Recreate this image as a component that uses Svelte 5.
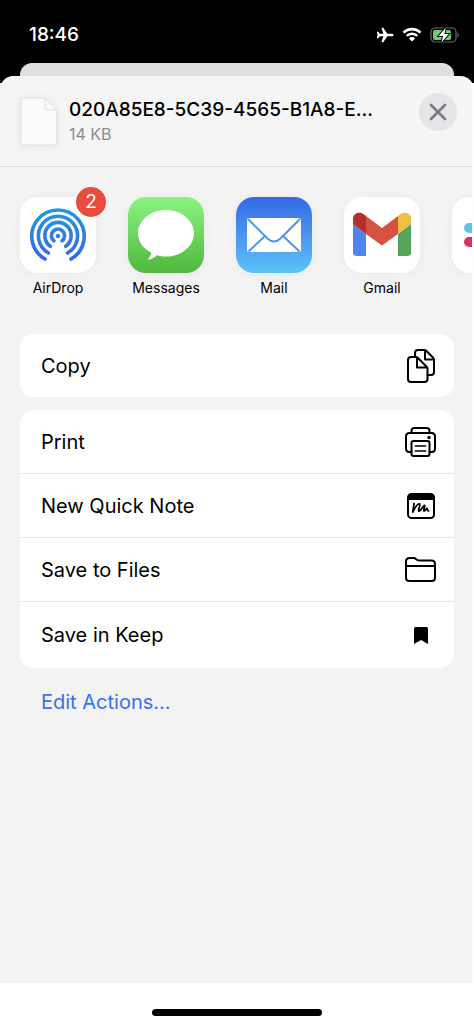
<script>
  const apps = [
    { id: "airdrop", name: "AirDrop", badge: 2 },
    { id: "messages", name: "Messages" },
    { id: "mail", name: "Mail" },
    { id: "gmail", name: "Gmail" },
    { id: "slack", name: "" }
  ];

  const actionGroups = [
    [{ id: "copy", label: "Copy" }],
    [
      { id: "print", label: "Print" },
      { id: "note", label: "New Quick Note" },
      { id: "files", label: "Save to Files" },
      { id: "keep", label: "Save in Keep" }
    ]
  ];
</script>

<div class="screen">
  <div class="status">
    <span class="status__time">18:46</span>
    <div class="status__icons">
      <svg width="18" height="16" viewBox="0 0 18 16" fill="#fff" aria-hidden="true">
        <path d="M17.6 8c0 .8-1.2 1.3-2.4 1.3h-3.8L7.2 15.2H5.4l2-5.9H3.8l-1.6 2H.8L1.6 8 .8 4.7h1.4l1.6 2h3.6l-2-5.9h1.8l4.2 5.9h3.8c1.2 0 2.4.5 2.4 1.3z" />
      </svg>
      <svg width="20" height="15" viewBox="0 0 20 15" fill="none" stroke="#fff" stroke-width="2.6" aria-hidden="true">
        <path d="M1.5 5.6a12.2 12.2 0 0 1 17 0M4.7 8.9a7.6 7.6 0 0 1 10.6 0" />
        <path d="M10 14.5l-3.1-3.1a4.4 4.4 0 0 1 6.2 0z" fill="#fff" stroke="none" />
      </svg>
      <svg width="30" height="16" viewBox="0 0 30 16" aria-hidden="true">
        <rect x="1" y="1" width="25" height="14" rx="4" fill="none" stroke="#6b6b6b" stroke-width="1.2" />
        <rect x="3" y="3" width="18" height="10" rx="2" fill="#6fce72" />
        <path d="M27.5 5.5c1.8.6 1.8 4.4 0 5z" fill="#6b6b6b" />
        <path d="M15.800.8L8.6 8.9h4.5L11.4 15.400l7.5-8.3h-4.6z" fill="#fff" stroke="#000" stroke-width="2" paint-order="stroke" />
      </svg>
    </div>
  </div>

  <div class="behind"></div>

  <main class="sheet">
    <header class="file">
      <svg class="file__icon" width="38" height="49" viewBox="0 0 38 49" aria-hidden="true">
        <path d="M1 1h24l12 12v35H1z" fill="#fcfcfc" stroke="#dcdcdc" />
        <path d="M25 1v10.5q0 1.5 1.5 1.5H37z" fill="#f8f8f8" stroke="#dcdcdc" />
      </svg>
      <div class="file__info">
        <h1 class="file__name">020A85E8-5C39-4565-B1A8-E...</h1>
        <p class="file__size">14 KB</p>
      </div>
      <button class="close" aria-label="Close">
        <svg width="18" height="18" viewBox="0 0 18 18" fill="none" stroke="#7c7c80" stroke-width="2.6" stroke-linecap="round">
          <path d="M2 2l14 14M16 2L2 16" />
        </svg>
      </button>
    </header>

    <div class="apps">
      {#each apps as app}
        <button class="app" aria-label={app.name || app.id}>
          <span class="app__icon app__icon--{app.id}">
            {#if app.id === "airdrop"}
              <svg viewBox="0 0 76 76" fill="none" stroke="url(#air)" stroke-width="3.600" stroke-linecap="round">
                <defs>
                  <linearGradient id="air" gradientUnits="userSpaceOnUse" x1="0" y1="11" x2="0" y2="64">
                    <stop offset="0" stop-color="#1d9be2" />
                    <stop offset="1" stop-color="#3a63e6" />
                  </linearGradient>
                </defs>
                <path d="M25 62a26.200 26.200 0 1 1 26 0" />
                <path d="M28.500 56a19.600 19.600 0 1 1 19 0" />
                <path d="M30.300 49.300a13.200 13.200 0 1 1 15.400 0" />
                <path d="M34 43.900a6.600 6.600 0 1 1 8 0" />
                <circle cx="38" cy="39" r="2.200" fill="url(#air)" stroke="none" />
              </svg>
            {:else if app.id === "messages"}
              <svg viewBox="0 0 76 76" fill="#fff">
                <path d="M38 13c15.600 0 28 10.500 28 23.300S53.600 59.600 38 59.600c-3.200 0-6.300-.4-9.200-1.300-2.400 2.500-5.700 4.200-9.300 4.400 2-1.700 3.500-4.600 3.800-7C15.200 51.600 10 44.600 10 36.300 10 23.500 22.400 13 38 13z" />
              </svg>
            {:else if app.id === "mail"}
              <svg viewBox="0 0 76 76" fill="none" stroke="#4193ee" stroke-width="1.800">
                <rect x="11" y="21" width="54" height="34" rx="2" fill="#fff" stroke="none" />
                <path d="M12 22l19.500 19.500q6.500 6 13 0L64 22M12.500 54.500L29 39M63.500 54.500L47 39" />
              </svg>
            {:else if app.id === "gmail"}
              <svg viewBox="0 0 76 76">
                <path d="M9 27l13 10v22H12.500Q9 59 9 55.500z" fill="#4f83ee" />
                <path d="M54 37l13-10v28.500q0 3.500-3.500 3.500H54z" fill="#54a459" />
                <path d="M22 19l16 12 16-12V37L38 48.500 22 37z" fill="#d75143" />
                <path d="M9 27v-5c0-6 6-8 10.500-4.800l2.500 1.900V37z" fill="#b3302b" />
                <path d="M54 37V19.100l2.500-1.900C61 14 67 16 67 22v5z" fill="#efbf42" />
              </svg>
            {:else}
              <svg viewBox="0 0 76 76">
                <rect x="12" y="26" width="25" height="10" rx="5" fill="#60c3ec" />
                <rect x="12" y="40" width="25" height="10" rx="5" fill="#d8305f" />
              </svg>
            {/if}
            {#if app.badge}
              <span class="badge">{app.badge}</span>
            {/if}
          </span>
          <span class="app__name">{app.name}</span>
        </button>
      {/each}
    </div>

    <div class="actions">
      {#each actionGroups as group}
        <ul class="group">
          {#each group as action}
            <li class="group__item">
              <button class="action">
                <span>{action.label}</span>
                <span class="action__icon">
                  {#if action.id === "copy"}
                    <svg width="28" height="34" viewBox="0 0 28 34">
                      <path d="M8 7.500V4q0-3 3-3h6.500q1 0 1.700.7l7 7q.8.8.8 1.800V23q0 3-3 3h-3.500M18 1.500V10.500h8.500" />
                      <path d="M4 8h5q1 0 1.700.7l9 9q.8.8.8 1.800V30q0 3-3 3H4q-3 0-3-3V11q0-3 3-3zM10 8.500V18.500h10" />
                    </svg>
                  {:else if action.id === "print"}
                    <svg width="31" height="30" viewBox="0 0 31 30">
                      <path d="M6.500 6V4q0-3 3-3h12q3 0 3 3v2" />
                      <path d="M6.500 25H4.500Q1 25 1 21.500V9.500Q1 6 4.500 6h22Q30 6 30 9.500v12q0 3.500-3.500 3.500h-2" />
                      <rect x="6.500" y="14" width="18" height="15" rx="2" />
                      <path d="M10.500 19h10M10.500 24h10" stroke-width="1.700" />
                      <circle cx="24" cy="10.500" r="1.700" fill="#000" stroke="none" />
                    </svg>
                  {:else if action.id === "note"}
                    <svg width="28" height="26" viewBox="0 0 28 26">
                      <rect x="1" y="1" width="26" height="24" rx="3.500" />
                      <path d="M1 7V4.500Q1 1 4.500 1h19Q27 1 27 4.500V7z" fill="#000" stroke="none" />
                      <path d="M7 10.500L5.800 19C8 14.500 11 10.300 12.600 10.900 13.800 11.500 10.600 17.500 11.900 18.300 13.300 18.900 16 12 17.600 12.300 18.600 12.800 15.800 17.300 17 17.900 18.300 18.200 18.900 15.300 20 15.500 20.800 15.800 19.800 17.900 21.500 17.900" stroke-width="1.800" />
                    </svg>
                  {:else if action.id === "files"}
                    <svg width="31" height="25" viewBox="0 0 31 25">
                      <path d="M1 20.500V4.500Q1 1 4.500 1h4Q10 1 11 2l.5.500q1 .9 2.500.9h12.500Q30 3.400 30 6.900v13.600q0 3.500-3.500 3.500h-22Q1 24 1 20.500zM1 9h29" />
                    </svg>
                  {:else}
                    <svg width="14" height="17" viewBox="0 0 14 17">
                      <path d="M0 17V1.500Q0 0 1.500 0h11Q14 0 14 1.500V17l-7-4z" fill="#000" stroke="none" />
                    </svg>
                  {/if}
                </span>
              </button>
            </li>
          {/each}
        </ul>
      {/each}
      <button class="edit">Edit Actions...</button>
    </div>
  </main>

  <footer class="home">
    <div class="home__bar"></div>
  </footer>
</div>

<style>
  :global(body) {
    margin: 0;
    background: #fff;
  }

  .screen {
    display: flex;
    flex-direction: column;
    min-height: 100vh;
    overflow: hidden;
    background: linear-gradient(#000 83px, #fff 83px);
    color: #000;
    font-family: Inter, "Liberation Sans", sans-serif;
  }

  button {
    padding: 0;
    border: none;
    background: none;
    color: inherit;
    font: inherit;
    cursor: pointer;
  }

  .status {
    display: flex;
    align-items: center;
    justify-content: space-between;
    height: 57px;
    padding: 6px 14px 0 29px;
    color: #fff;
  }

  .status__time {
    font-size: 19px;
    font-weight: 500;
    line-height: 24px;
  }

  .status__icons {
    display: flex;
    align-items: center;
    gap: 8px;
  }

  .behind {
    height: 13px;
    margin: 0 20px;
    border-radius: 12px 12px 0 0;
    background: #dfdfdf;
  }

  .sheet {
    flex: 1;
    border-right: 2px solid #fdfdfd;
    border-radius: 14px 14px 0 0;
    background: #f3f3f3;
  }

  .file {
    display: flex;
    gap: 11px;
    height: 69px;
    padding: 21px 15px 0 20px;
    border-bottom: 1px solid #dfdfdf;
    border-radius: 14px 14px 0 0;
    background: #f5f5f5;
  }

  .file__icon {
    flex-shrink: 0;
    filter: drop-shadow(0 1px 4px rgba(0, 0, 0, 0.06));
  }

  .file__info {
    flex: 1;
    min-width: 0;
  }

  .file__name {
    margin: 0;
    overflow: hidden;
    font-size: 19px;
    font-weight: 500;
    line-height: 25px;
    white-space: nowrap;
  }

  .file__size {
    margin: 0;
    color: #8b8b8e;
    font-size: 16px;
    line-height: 24px;
  }

  .close {
    display: flex;
    align-items: center;
    justify-content: center;
    flex-shrink: 0;
    width: 38px;
    height: 38px;
    margin-top: -4px;
    border-radius: 50%;
    background: #e5e5e7;
  }

  .apps {
    display: flex;
    gap: 32px;
    padding: 30px 0 36px 20px;
    overflow: hidden;
  }

  .app {
    display: flex;
    flex-direction: column;
    align-items: center;
    gap: 5px;
    flex-shrink: 0;
    width: 76px;
  }

  .app__icon {
    position: relative;
    width: 76px;
    height: 76px;
    border-radius: 18px;
    background: #fff;
    box-shadow: 0 1px 14px rgba(0, 0, 0, 0.04);
  }

  .app__icon svg {
    display: block;
  }

  .app__icon--messages {
    background: linear-gradient(#8bf383, #50b83c);
  }

  .app__icon--mail {
    background: linear-gradient(#3768e7, #5cc3f8);
  }

  .app__name {
    min-height: 20px;
    font-size: 14px;
    line-height: 20px;
    white-space: nowrap;
  }

  .badge {
    position: absolute;
    top: -10px;
    right: -10px;
    width: 30px;
    height: 30px;
    border-radius: 50%;
    background: #e94b3c;
    color: #fff;
    font-size: 19px;
    line-height: 30px;
    text-align: center;
  }

  .actions {
    display: flex;
    flex-direction: column;
    align-items: flex-start;
    gap: 13px;
    padding: 0 18px 0 20px;
  }

  .group {
    width: 100%;
    margin: 0;
    padding: 0;
    border-radius: 14px;
    background: #fff;
    list-style: none;
  }

  .group__item + .group__item {
    border-top: 1px solid #e6e6e6;
  }

  .action {
    display: flex;
    align-items: center;
    justify-content: space-between;
    width: 100%;
    height: 63px;
    padding: 0 18px 0 21px;
    font-size: 20px;
    line-height: 28px;
    text-align: left;
  }

  .group__item + .group__item:last-child .action {
    height: 66px;
  }

  .action__icon {
    display: flex;
    justify-content: center;
    width: 31px;
  }

  .action__icon svg {
    fill: none;
    stroke: #000;
    stroke-width: 2;
    stroke-linecap: round;
    stroke-linejoin: round;
  }

  .edit {
    margin: 7px 21px;
    color: #3474ea;
    font-size: 20px;
    line-height: 28px;
  }

  .home {
    display: flex;
    align-items: flex-end;
    justify-content: center;
    height: 33px;
    padding-bottom: 10px;
  }

  .home__bar {
    width: 36%;
    height: 7px;
    border-radius: 4px;
    background: #000;
  }
</style>
